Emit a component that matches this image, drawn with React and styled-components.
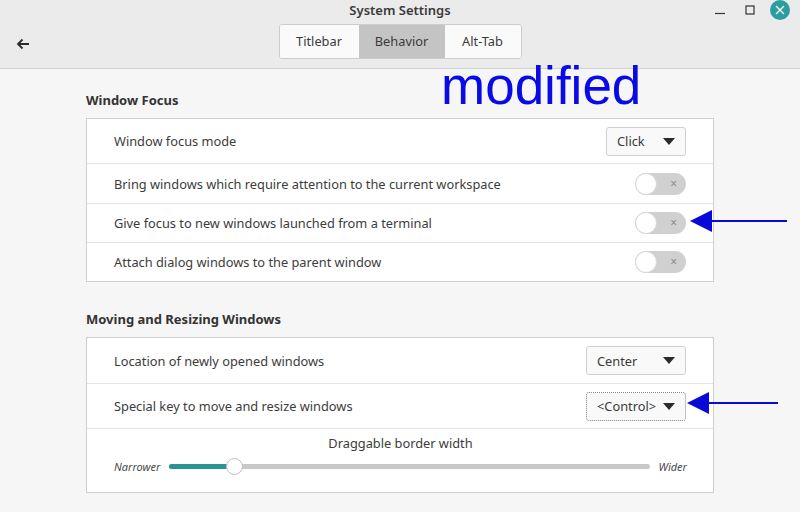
import React from 'react';
import styled, { createGlobalStyle } from 'styled-components';

const GlobalStyle = createGlobalStyle`
  html, body { margin: 0; padding: 0; }
  body {
    width: 800px;
    height: 512px;
    overflow: hidden;
    background: #f6f6f6;
    font-family: "Noto Sans", "DejaVu Sans", sans-serif;
    color: #3c3c3c;
  }
`;

const Window = styled.div`
  position: relative;
  width: 800px;
  height: 512px;
  background: #f6f6f6;
`;

const Header = styled.header`
  height: 68px;
  border-bottom: 1px solid #d2d2d2;
  background: #ebebeb;
  display: grid;
  grid-template-columns: 120px 1fr 120px;
  grid-template-rows: 20px 1fr;
  align-items: center;
`;

const Title = styled.div`
  grid-column: 2;
  grid-row: 1;
  text-align: center;
  font-size: 13px;
  font-weight: 600;
  color: #3a3a3a;
`;

const Controls = styled.div`
  grid-column: 3;
  grid-row: 1;
  display: flex;
  justify-content: flex-end;
  align-items: center;
  gap: 10px;
  padding-right: 10px;
`;

const CtlButton = styled.span`
  width: 20px;
  height: 20px;
  display: flex;
  align-items: center;
  justify-content: center;
  border-radius: 50%;
  background: ${(p) => (p.$close ? '#2a9d9f' : 'transparent')};
`;

const Back = styled.div`
  grid-column: 1;
  grid-row: 2;
  padding-left: 16px;
  display: flex;
  align-items: center;
`;

const Tabs = styled.div`
  grid-column: 2;
  grid-row: 2;
  justify-self: center;
  display: flex;
  height: 33px;
  margin-bottom: 6px;
  border: 1px solid #cdcdcd;
  border-radius: 3px;
  overflow: hidden;
  background: #fafafa;
`;

const Tab = styled.div`
  display: flex;
  align-items: center;
  justify-content: center;
  width: ${(p) => p.$w}px;
  font-size: 12.8px;
  color: #3a3a3a;
  background: ${(p) => (p.$active ? '#c4c4c4' : '#fafafa')};
`;

const Content = styled.main`
  padding: 22px 0 0 86px;
  width: 628px;
`;

const SectionTitle = styled.h2`
  margin: ${(p) => (p.$first ? '0' : '28px')} 0 9px 0;
  font-size: 13px;
  font-weight: 700;
  line-height: 18px;
  color: #333;
`;

const Box = styled.div`
  background: #fff;
  border: 1px solid #cfcfcf;
`;

const Row = styled.div`
  height: ${(p) => p.$h}px;
  display: flex;
  align-items: center;
  justify-content: space-between;
  padding: 0 27px;
  font-size: 12.8px;
  color: #3c3c3c;
  & + & {
    border-top: 1px solid #e4e4e4;
  }
`;

const Select = styled.div`
  width: ${(p) => p.$w}px;
  height: 29px;
  box-sizing: border-box;
  display: flex;
  align-items: center;
  justify-content: space-between;
  padding: 0 10px 0 10px;
  border: 1px ${(p) => (p.$focus ? 'dotted #8a8a8a' : 'solid #cfcfcf')};
  border-radius: 3px;
  background: #f9f9f9;
  font-size: 12.8px;
  color: #3a3a3a;
`;

const Caret = styled.span`
  width: 0;
  height: 0;
  border-left: 6px solid transparent;
  border-right: 6px solid transparent;
  border-top: 7px solid #2b2b2b;
`;

const Switch = styled.div`
  position: relative;
  width: 51px;
  height: 22px;
  border-radius: 11px;
  background: #d0d0d0;
  flex-shrink: 0;
`;

const Knob = styled.span`
  position: absolute;
  left: 0;
  top: 0;
  width: 22px;
  height: 22px;
  border-radius: 50%;
  box-sizing: border-box;
  background: #fff;
  border: 1px solid #d8d8d8;
`;

const Cross = styled.span`
  position: absolute;
  right: 9px;
  top: 3px;
  font-size: 12px;
  line-height: 16px;
  color: #8c8c8c;
`;

const SliderRow = styled.div`
  border-top: 1px solid #e4e4e4;
  height: 63px;
  padding: 0 26px 0 27px;
  display: flex;
  flex-direction: column;
  align-items: stretch;
`;

const SliderLabel = styled.div`
  text-align: center;
  font-size: 12.8px;
  line-height: 18px;
  margin-top: 5px;
  color: #3c3c3c;
`;

const SliderLine = styled.div`
  display: flex;
  align-items: center;
  gap: 9px;
  margin-top: 7px;
  font-size: 11px;
  font-style: italic;
  color: #4a4a4a;
`;

const Track = styled.div`
  position: relative;
  flex: 1;
  height: 5px;
  border-radius: 3px;
  background: #c8c8c8;
`;

const Fill = styled.div`
  position: absolute;
  left: 0;
  top: 0;
  height: 5px;
  border-radius: 3px;
  background: #2a9396;
`;

const Thumb = styled.span`
  position: absolute;
  top: -6px;
  width: 17px;
  height: 17px;
  margin-left: -8px;
  box-sizing: border-box;
  border-radius: 50%;
  background: #fff;
  border: 1px solid #c0c0c0;
`;

const Modified = styled.div`
  position: absolute;
  left: 441px;
  top: 56px;
  font-family: "Liberation Sans", Arial, sans-serif;
  font-size: 53px;
  line-height: 60px;
  color: #0a0ae6;
`;

const Arrow = styled.svg`
  position: absolute;
  left: ${(p) => p.$x}px;
  top: ${(p) => p.$y}px;
`;

const Toggle = () => (
  <Switch>
    <Knob />
    <Cross>×</Cross>
  </Switch>
);

const ArrowMark = ({ x, y, len }) => (
  <Arrow $x={x} $y={y} width={len} height={26} viewBox={`0 0 ${len} 26`}>
    <polygon points="0,13 22,2 22,24" fill="#0a0ad8" />
    <line x1="20" y1="13" x2={len} y2="13" stroke="#0a0ad8" strokeWidth="2" />
  </Arrow>
);

export default function App() {
  const border = 0.135;
  return (
    <Window>
      <GlobalStyle />
      <Header>
        <Title>System Settings</Title>
        <Controls>
          <CtlButton>
            <svg width="12" height="10" viewBox="0 0 12 10"><line x1="1" y1="8.5" x2="11" y2="8.5" stroke="#333" strokeWidth="1.2" /></svg>
          </CtlButton>
          <CtlButton>
            <svg width="10" height="10" viewBox="0 0 10 10"><rect x="1" y="1" width="8" height="8" fill="none" stroke="#333" strokeWidth="1.2" /></svg>
          </CtlButton>
          <CtlButton $close>
            <svg width="10" height="10" viewBox="0 0 10 10"><path d="M1 1L9 9M9 1L1 9" stroke="#fff" strokeWidth="1.4" /></svg>
          </CtlButton>
        </Controls>
        <Back>
          <svg width="14" height="14" viewBox="0 0 14 14">
            <path d="M13 7H2M6.5 2.5L2 7l4.5 4.5" fill="none" stroke="#2b2b2b" strokeWidth="1.8" />
          </svg>
        </Back>
        <Tabs>
          <Tab $w={79}>Titlebar</Tab>
          <Tab $w={86} $active>Behavior</Tab>
          <Tab $w={76}>Alt-Tab</Tab>
        </Tabs>
      </Header>

      <Content>
        <SectionTitle $first>Window Focus</SectionTitle>
        <Box>
          <Row $h={44}>
            Window focus mode
            <Select $w={80}>Click<Caret /></Select>
          </Row>
          <Row $h={39}>
            Bring windows which require attention to the current workspace
            <Toggle />
          </Row>
          <Row $h={38}>
            Give focus to new windows launched from a terminal
            <Toggle />
          </Row>
          <Row $h={38}>
            Attach dialog windows to the parent window
            <Toggle />
          </Row>
        </Box>

        <SectionTitle>Moving and Resizing Windows</SectionTitle>
        <Box>
          <Row $h={45}>
            Location of newly opened windows
            <Select $w={100}>Center<Caret /></Select>
          </Row>
          <Row $h={44}>
            Special key to move and resize windows
            <Select $w={100} $focus>&lt;Control&gt;<Caret /></Select>
          </Row>
          <SliderRow>
            <SliderLabel>Draggable border width</SliderLabel>
            <SliderLine>
              Narrower
              <Track>
                <Fill style={{ width: `${border * 100}%` }} />
                <Thumb style={{ left: `${border * 100}%` }} />
              </Track>
              Wider
            </SliderLine>
          </SliderRow>
        </Box>
      </Content>

      <Modified>modified</Modified>
      <ArrowMark x={690} y={208} len={97} />
      <ArrowMark x={687} y={390} len={91} />
    </Window>
  );
}
